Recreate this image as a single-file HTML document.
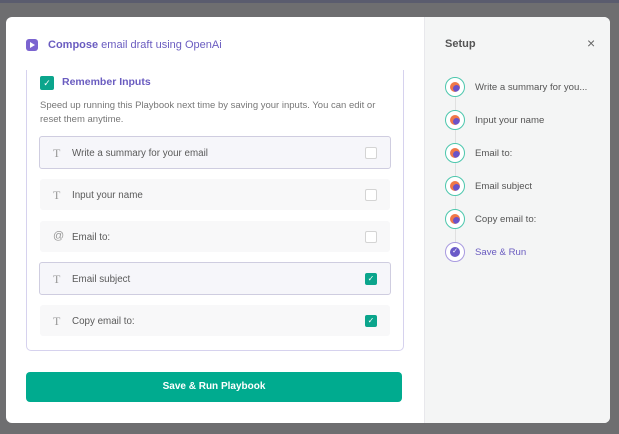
<html><head><style>
body{margin:0;width:619px;height:434px;background:#6e6e70;font-family:"Liberation Sans",sans-serif;position:relative;overflow:hidden}
.top{position:absolute;left:0;top:0;width:619px;height:3px;background:#5a5c6e}
.modal{position:absolute;left:6px;top:17px;width:604px;height:406px;background:#fff;border-radius:6px;overflow:hidden}
.side{position:absolute;left:418px;top:0;width:186px;height:406px;background:#f4f5f5;border-left:1px solid #e8e8ec}
.t{position:absolute;white-space:nowrap}
.card{position:absolute;left:20px;top:53px;width:376px;height:280px;border:1px solid #d6d2ee;border-top:none;border-radius:0 0 5px 5px}
.row{position:absolute;left:13px;width:350px;height:31px;background:#f8f8f9;border-radius:3px;font-size:9.8px;color:#5a5a5a}
.row.b{border:1px solid #cfcde0;background:#f6f6fa;left:12px}
.row .i{position:absolute;left:13px;top:9px;color:#999;font-family:"Liberation Serif",serif;font-size:12px}
.row .l{position:absolute;left:32px;top:11px}
.cb{position:absolute;right:13px;top:10px;width:10px;height:10px;border:1px solid #d4d4d4;border-radius:2px;background:#fff}
.cb.on{background:#0ba58c;border-color:#0ba58c;color:#fff;font-size:8px;line-height:10px;text-align:center}
.step{position:absolute;left:20px;width:18px;height:18px;border:1.5px solid #4cc7ad;border-radius:50%;background:#fff}
.step::after{content:"";position:absolute;left:4px;top:4px;width:10px;height:10px;border-radius:50%;background:radial-gradient(circle at 65% 65%,#6b52c8 35%,#f07848 40%)}
.sl{position:absolute;left:50px;font-size:9.6px;color:#555;white-space:nowrap}
</style></head><body>
<div class="top"></div>
<div class="modal">
<div style="position:absolute;left:20px;top:22px;width:12px;height:12px;background:#7b64d0;border-radius:3px"><div style="position:absolute;left:4px;top:3px;border-left:5px solid #fff;border-top:3px solid transparent;border-bottom:3px solid transparent"></div></div>
<div class="t" style="left:42px;top:22px;font-size:11px;color:#6a5cc0"><b>Compose</b> email draft using OpenAi</div>
<div class="card">
<div class="cb on" style="left:13px;top:6px;right:auto;width:12px;height:12px;line-height:12px;font-size:9px">✓</div>
<div class="t" style="left:35px;top:6px;font-size:10.5px;font-weight:bold;color:#6a5cc0">Remember Inputs</div>
<div class="t" style="left:13px;top:29px;font-size:9.5px;color:#777;line-height:14px">Speed up running this Playbook next time by saving your inputs. You can edit or<br>reset them anytime.</div>
<div class="row b" style="top:66px"><span class="i">T</span><span class="l">Write a summary for your email</span><div class="cb"></div></div>
<div class="row" style="top:109px"><span class="i">T</span><span class="l">Input your name</span><div class="cb"></div></div>
<div class="row" style="top:151px"><span class="i" style="font-family:'Liberation Sans';font-size:11px">@</span><span class="l">Email to:</span><div class="cb"></div></div>
<div class="row b" style="top:192px"><span class="i">T</span><span class="l">Email subject</span><div class="cb on">✓</div></div>
<div class="row" style="top:235px"><span class="i">T</span><span class="l">Copy email to:</span><div class="cb on">✓</div></div>
</div>
<div style="position:absolute;left:20px;top:355px;width:376px;height:30px;background:#00ab8f;border-radius:4px;color:#fff;font-size:10px;font-weight:bold;text-align:center;line-height:30px">Save &amp; Run Playbook</div>
<div class="side">
<div class="t" style="left:20px;top:21px;font-size:11px;font-weight:bold;color:#555">Setup</div>
<div class="t" style="left:162px;top:18px;font-size:14px;color:#666">×</div>
<div style="position:absolute;left:30px;top:75px;width:1px;height:160px;background:#e0e0e0"></div>
<div class="step" style="top:60px"></div><div class="sl" style="top:65px">Write a summary for you...</div>
<div class="step" style="top:93px"></div><div class="sl" style="top:98px">Input your name</div>
<div class="step" style="top:126px"></div><div class="sl" style="top:131px">Email to:</div>
<div class="step" style="top:159px"></div><div class="sl" style="top:164px">Email subject</div>
<div class="step" style="top:192px"></div><div class="sl" style="top:197px">Copy email to:</div>
<div style="position:absolute;left:20px;top:225px;width:18px;height:18px;border:1.5px solid #a99be0;border-radius:50%;background:#fff"><div style="position:absolute;left:4px;top:4px;width:10px;height:10px;border-radius:50%;background:#6b5bc8;color:#fff;font-size:7px;text-align:center;line-height:10px">✓</div></div>
<div class="sl" style="top:230px;color:#6a5cc0">Save &amp; Run</div>
</div>
</div>
</body></html>
